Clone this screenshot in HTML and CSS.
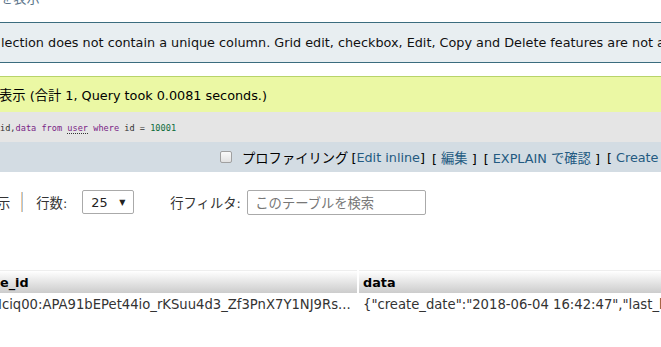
FILE: index.html
```html
<!DOCTYPE html>
<html lang="ja">
<head>
<meta charset="utf-8">
<link rel="stylesheet" href="styles.css">
</head>
<body>
<div class="page">
  <div class="crumb ja">を表示</div>
  <div class="notice">lection does not contain a unique column. Grid edit, checkbox, Edit, Copy and Delete features are not a</div>
  <div class="success"><span class="ja">表示</span> (<span class="ja">合計</span> 1, Query took 0.0081 seconds.)</div>
  <div class="sql"><code><span class="plain">id,</span><span class="kw">data</span> <span class="kw">from</span> <span class="kw tbl">user</span> <span class="kw">where</span> <span class="plain">id</span> <span class="plain">=</span> <span class="num">10001</span></code></div>
  <div class="tools">
    <span class="check"></span>
    <span class="lbl ja">プロファイリング</span>
    <span class="br">[<a class="lnk">Edit inline</a>]</span>
    <span class="br">[ <a class="lnk ja">編集</a> ]</span>
    <span class="br">[ <a class="lnk">EXPLAIN <span class="ja">で確認</span></a> ]</span>
    <span class="br">[ <a class="lnk">Create</a></span>
  </div>
  <div class="nav">
    <span class="cut ja">示</span>
    <span class="divider"></span>
    <span class="lbl2"><span class="ja">行数</span>:</span>
    <span class="select"><span>25</span><span class="arrow">▼</span></span>
    <span class="lbl3"><span class="ja">行フィルタ</span>:</span>
    <span class="input ja">このテーブルを検索</span>
  </div>
  <div class="grid">
    <div class="hrow">
      <div class="th c1">e_id</div>
      <div class="th c2">data</div>
    </div>
    <div class="drow">
      <div class="td c1">Iciq00:APA91bEPet44io_rKSuu4d3_Zf3PnX7Y1NJ9Rs...</div>
      <div class="td c2">{"create_date":"2018-06-04 16:42:47","last_lo</div>
    </div>
  </div>
</div>
</body>
</html>
```

FILE: styles.css
```css
html, body {
  margin: 0;
  padding: 0;
  background: #fff;
  overflow: hidden;
}
.page {
  width: 661px;
  height: 347px;
  overflow: hidden;
  font-family: "DejaVu Sans", "Noto Sans CJK JP", sans-serif;
  font-size: 12.8px;
  color: #000;
}
.ja {
  font-family: "Noto Sans CJK JP", sans-serif;
  font-size: 13.3px;
}
.crumb {
  height: 16px;
  line-height: 16px;
  margin-top: -10px;
  color: #5a7489;
  white-space: nowrap;
}
.notice {
  margin: 16px -10px 0 -10px;
  height: 39px;
  line-height: 39px;
  padding-left: 11px;
  background: #e8eef1;
  border-top: 1px solid #3a6c7e;
  border-bottom: 1px solid #3a6c7e;
  white-space: nowrap;
  overflow: hidden;
  color: #111;
}
.success {
  margin: 13px -10px 0 -10px;
  height: 35px;
  line-height: 35px;
  padding-left: 9px;
  background: #ebf8a4;
  border-top: 1px solid #b8d46a;
  white-space: nowrap;
  overflow: hidden;
}
.sql {
  height: 30px;
  line-height: 30px;
  background: #e5e5e5;
  white-space: nowrap;
}
.sql code {
  font-family: "DejaVu Sans Mono", monospace;
  font-size: 8.6px;
}
.plain { color: #333; }
.kw { color: #7a1f86; }
.tbl {
  text-decoration: underline dotted #333;
  text-underline-offset: 2px;
}
.num { color: #0b6b3a; }
.tools {
  height: 30px;
  background: #d3dce3;
  display: flex;
  align-items: center;
  padding-left: 220px;
  white-space: nowrap;
  overflow: hidden;
}
.check {
  flex: none;
  width: 10px;
  height: 10px;
  border: 1px solid #a0a0a0;
  border-radius: 2px;
  background: linear-gradient(#fafafa, #e2e2e2);
  margin-right: 10px;
}
.lbl { margin-right: 3px; }
.br { margin-right: 7px; flex: none; }
.lnk { color: #235a81; }
.nav {
  display: flex;
  align-items: center;
  height: 24px;
  margin-top: 18px;
  white-space: nowrap;
  color: #333;
}
.cut { margin-left: -3px; }
.divider {
  width: 2px;
  height: 20px;
  margin: 0 13px 0 11px;
  background: linear-gradient(90deg, #f2c89a 50%, #a9c6e0 50%);
}
.lbl2 { width: 46px; flex: none; }
.select {
  box-sizing: border-box;
  width: 52px;
  height: 24px;
  border: 1px solid #aaa;
  border-radius: 2px;
  display: flex;
  align-items: center;
  justify-content: space-between;
  padding: 0 8px 0 8px;
  margin-right: 36px;
  color: #222;
}
.arrow { font-size: 8px; color: #222; }
.lbl3 { width: 77px; flex: none; }
.input {
  box-sizing: border-box;
  width: 179px;
  height: 25px;
  border: 1px solid #aaa;
  border-radius: 2px;
  padding-left: 7px;
  line-height: 23px;
  color: #777;
}
.grid {
  margin-top: 56px;
}
.hrow, .drow {
  display: flex;
}
.hrow {
  height: 23px;
}
.th {
  font-weight: bold;
  background: linear-gradient(#ffffff, #cccccc);
  border-top: 1px solid #eee;
  line-height: 23px;
  white-space: nowrap;
  overflow: hidden;
}
.c1 {
  width: 357px;
  flex: none;
  padding-left: 0;
  box-sizing: border-box;
}
.c2 {
  flex: none;
  width: 302px;
  margin-left: 2px;
  padding-left: 4px;
  box-sizing: border-box;
  white-space: nowrap;
  overflow: hidden;
}
.td {
  line-height: 22px;
  padding-top: 1px;
  white-space: nowrap;
  overflow: hidden;
  color: #333;
  font-size: 13.2px;
}
.drow .c1 { margin-left: -2px; }
.drow .c2 { margin-left: 4px; }
```
